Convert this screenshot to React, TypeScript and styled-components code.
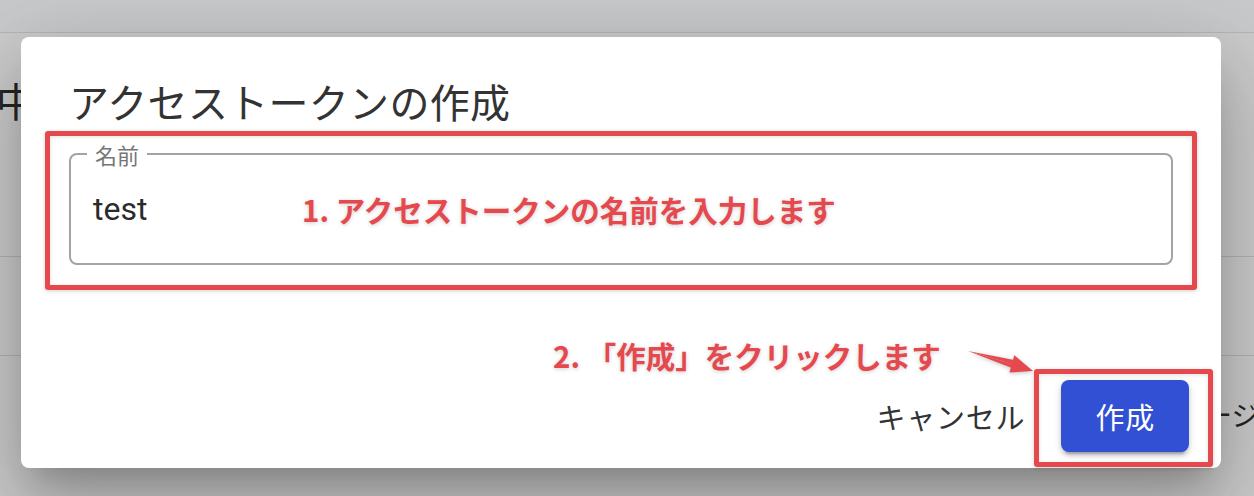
import React from "react";
import styled, { createGlobalStyle } from "styled-components";

const Global = createGlobalStyle`
  html, body { margin: 0; padding: 0; }
  body {
    width: 1254px;
    height: 496px;
    overflow: hidden;
    background: #ffffff;
    font-family: Roboto, "Noto Sans CJK JP", "Noto Sans", sans-serif;
  }
`;

const Page = styled.div`
  position: relative;
  width: 1254px;
  height: 496px;
  overflow: hidden;
  display: flex;
  flex-direction: column;
`;

const Header = styled.div`
  height: 32px;
  flex: none;
  background: #fcfdff;
  border-bottom: 1px solid #e3e4e8;
`;

const Heading = styled.div`
  height: 223px;
  flex: none;
  box-sizing: border-box;
  padding-top: 35px;
  font-family: "Noto Sans CJK JP", sans-serif;
  font-size: 40px;
  line-height: 64px;
  color: #2f2f2f;
  white-space: nowrap;
  margin-left: -4px;
`;

const TableRow = styled.div`
  height: 98px;
  flex: none;
  border-top: 1px solid #e0e0e0;
  border-bottom: 1px solid #e0e0e0;
`;

const Footer = styled.div`
  padding-top: 38px;
  padding-left: 1176px;
  font-family: "Noto Sans CJK JP", sans-serif;
  font-size: 28px;
  line-height: 40px;
  color: #2f2f2f;
  white-space: nowrap;
`;

const Backdrop = styled.div`
  position: absolute;
  inset: 0;
  background: rgba(0, 0, 0, 0.2);
`;

const Dialog = styled.div`
  position: absolute;
  left: 21px;
  top: 37px;
  width: 1200px;
  height: 431px;
  box-sizing: border-box;
  background: #ffffff;
  border-radius: 8px;
  display: flex;
  flex-direction: column;
  box-shadow: 0 22px 30px -14px rgba(0, 0, 0, 0.2),
    0 48px 76px 6px rgba(0, 0, 0, 0.14), 0 18px 92px 16px rgba(0, 0, 0, 0.12);
`;

const Title = styled.h2`
  margin: 0;
  padding: 32px 48px 20px;
  font-family: "Noto Sans CJK JP", sans-serif;
  font-weight: 400;
  font-size: 40px;
  line-height: 64px;
  letter-spacing: 0.3px;
  color: #333333;
`;

const Content = styled.div`
  padding: 0 48px;
  flex: 1;
`;

const Field = styled.div`
  position: relative;
  height: 112px;
  box-sizing: border-box;
  border: 2px solid #a3a3a3;
  border-radius: 8px;
  display: flex;
  align-items: center;
  padding: 0 22px;
`;

const FieldLabel = styled.span`
  position: absolute;
  left: 16px;
  top: -16px;
  padding: 0 8px;
  background: #ffffff;
  font-family: "Noto Sans CJK JP", sans-serif;
  font-size: 22px;
  line-height: 30px;
  color: #767676;
`;

const FieldValue = styled.span`
  font-family: Roboto, sans-serif;
  font-size: 32px;
  line-height: 40px;
  color: #2b2b2b;
`;

const Actions = styled.div`
  display: flex;
  justify-content: flex-end;
  align-items: center;
  gap: 20px;
  padding: 16px 32px 16px 16px;
`;

const Button = styled.button<{ $primary?: boolean }>`
  height: 72px;
  box-sizing: border-box;
  border: none;
  border-radius: 8px;
  padding: ${(p) => (p.$primary ? "0 34px" : "0 16px")};
  font-family: "Noto Sans CJK JP", sans-serif;
  font-size: 29px;
  letter-spacing: 0.8px;
  font-weight: 400;
  cursor: pointer;
  background: ${(p) => (p.$primary ? "#3250d4" : "transparent")};
  color: ${(p) => (p.$primary ? "#ffffff" : "#333333")};
  box-shadow: ${(p) =>
    p.$primary
      ? "0 6px 2px -4px rgba(0,0,0,0.2), 0 4px 4px 0 rgba(0,0,0,0.14), 0 2px 10px 0 rgba(0,0,0,0.12)"
      : "none"};
`;

const Highlight = styled.div<{ $l: number; $t: number; $w: number; $h: number }>`
  position: absolute;
  left: ${(p) => p.$l}px;
  top: ${(p) => p.$t}px;
  width: ${(p) => p.$w}px;
  height: ${(p) => p.$h}px;
  box-sizing: border-box;
  border: 5px solid #e5484d;
  border-radius: 3px;
  box-shadow: 0 1px 4px rgba(0, 0, 0, 0.18), inset 0 1px 4px rgba(0, 0, 0, 0.12);
  pointer-events: none;
`;

const Note = styled.div<{ $l: number; $t: number }>`
  position: absolute;
  left: ${(p) => p.$l}px;
  top: ${(p) => p.$t}px;
  font-family: "Noto Sans CJK JP", sans-serif;
  font-weight: 700;
  font-size: 29.5px;
  line-height: 40px;
  color: #e5484d;
  white-space: nowrap;
  text-shadow: 0 1px 4px rgba(0, 0, 0, 0.2);
`;

const ArrowSvg = styled.svg`
  position: absolute;
  left: 940px;
  top: 305px;
  width: 80px;
  height: 40px;
  overflow: visible;
  filter: drop-shadow(0 1px 2px rgba(0, 0, 0, 0.25));
`;

export default function App() {
  return (
    <>
      <Global />
      <Page>
        <Header />
        <Heading>中</Heading>
        <TableRow />
        <Footer>ページ</Footer>
        <Backdrop />
        <Dialog>
          <Title>アクセストークンの作成</Title>
          <Content>
            <Field>
              <FieldLabel>名前</FieldLabel>
              <FieldValue>test</FieldValue>
            </Field>
          </Content>
          <Actions>
            <Button>キャンセル</Button>
            <Button $primary>作成</Button>
          </Actions>
          <Highlight $l={24} $t={94} $w={1152} $h={159} />
          <Highlight $l={1013} $t={332} $w={179} $h={98} />
          <Note $l={281} $t={152}>1. アクセストークンの名前を入力します</Note>
          <Note $l={532} $t={298}>2. 「作成」をクリックします</Note>
          <ArrowSvg viewBox="940 305 80 40">
            <path d="M947 314 L993 327.5 L993 323 Z" fill="#e5484d" />
            <path d="M947 314 L993 327.5 L991 331 Z" fill="#e5484d" />
            <path d="M1012 334 L988.5 335.6 L993.3 318.2 Z" fill="#e5484d" />
          </ArrowSvg>
        </Dialog>
      </Page>
    </>
  );
}
